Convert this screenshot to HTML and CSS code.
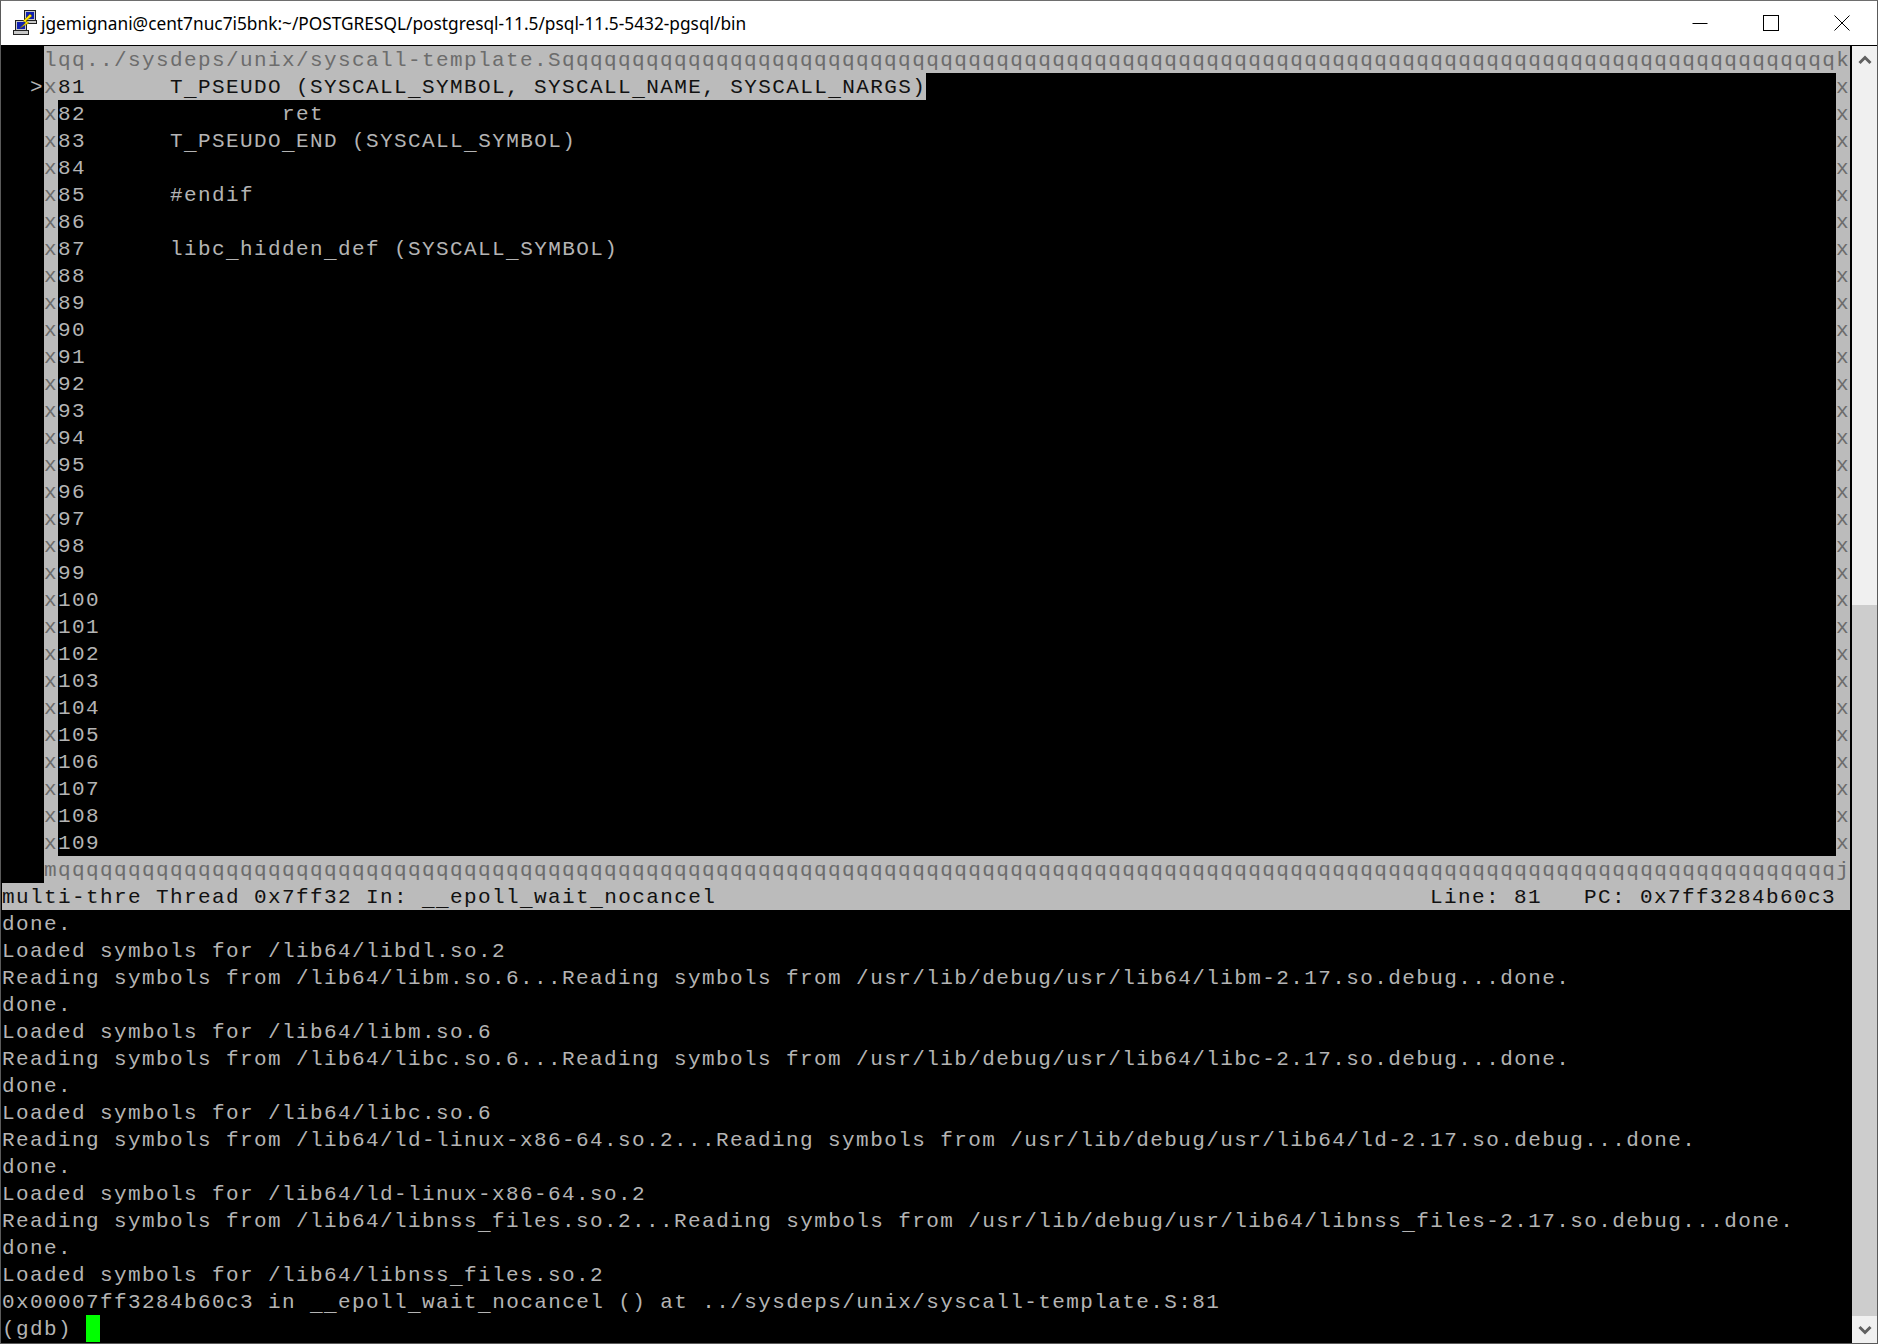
FILE: index.html
```html
<!DOCTYPE html>
<html lang="en">
<head>
<meta charset="utf-8">
<title>jgemignani@cent7nuc7i5bnk</title>
<link rel="stylesheet" href="styles.css">
</head>
<body>
<div class="window">
  <header class="titlebar">
    <svg class="app-icon" width="26" height="26" viewBox="0 0 26 26">
      <rect x="12.5" y="0.5" width="11" height="10" fill="#c8c8c8" stroke="#222"/>
      <rect x="14" y="2" width="8" height="7" fill="#1020b0"/>
      <rect x="14.5" y="10.5" width="10" height="3" fill="#c8c8c8" stroke="#222"/>
      <rect x="3.5" y="10.5" width="11" height="10" fill="#c8c8c8" stroke="#222"/>
      <rect x="5" y="12" width="8" height="7" fill="#1020b0"/>
      <rect x="1.5" y="20.5" width="15" height="4" fill="#c8c8c8" stroke="#222"/>
      <path d="M18 4 L11 11 L14 12.5 L8 18 L17 13 L14 11 L20 6 Z" fill="#ffe600" stroke="#6b5a00" stroke-width=".5"/>
    </svg>
    <span class="title">jgemignani@cent7nuc7i5bnk:~/POSTGRESQL/postgresql-11.5/psql-11.5-5432-pgsql/bin</span>
    <div class="controls">
      <svg width="16" height="16" viewBox="0 0 16 16"><path d="M0.5 8.5H15.5" stroke="#000" fill="none"/></svg>
      <svg width="16" height="16" viewBox="0 0 16 16"><rect x="0.5" y="0.5" width="15" height="15" stroke="#000" fill="none"/></svg>
      <svg width="16" height="16" viewBox="0 0 16 16"><path d="M0.5 0.5L15.5 15.5M15.5 0.5L0.5 15.5" stroke="#000" fill="none"/></svg>
    </div>
  </header>
  <div class="client">
    <main class="terminal">
      <div class="row"><span class="gutter"></span><span class="edge grow">lqq../sysdeps/unix/syscall-template.Sqqqqqqqqqqqqqqqqqqqqqqqqqqqqqqqqqqqqqqqqqqqqqqqqqqqqqqqqqqqqqqqqqqqqqqqqqqqqqqqqqqqqqqqqqqqk</span></div>
      <div class="row"><span class="gutter">&gt;</span><span class="edge">x</span><span class="code"><span class="hl">81      T<span class="us">_</span>PSEUDO (SYSCALL<span class="us">_</span>SYMBOL, SYSCALL<span class="us">_</span>NAME, SYSCALL<span class="us">_</span>NARGS)</span></span><span class="edge">x</span></div>
      <div class="row"><span class="gutter"></span><span class="edge">x</span><span class="code">82              ret</span><span class="edge">x</span></div>
      <div class="row"><span class="gutter"></span><span class="edge">x</span><span class="code">83      T<span class="us">_</span>PSEUDO<span class="us">_</span>END (SYSCALL<span class="us">_</span>SYMBOL)</span><span class="edge">x</span></div>
      <div class="row"><span class="gutter"></span><span class="edge">x</span><span class="code">84</span><span class="edge">x</span></div>
      <div class="row"><span class="gutter"></span><span class="edge">x</span><span class="code">85      #endif</span><span class="edge">x</span></div>
      <div class="row"><span class="gutter"></span><span class="edge">x</span><span class="code">86</span><span class="edge">x</span></div>
      <div class="row"><span class="gutter"></span><span class="edge">x</span><span class="code">87      libc<span class="us">_</span>hidden<span class="us">_</span>def (SYSCALL<span class="us">_</span>SYMBOL)</span><span class="edge">x</span></div>
      <div class="row"><span class="gutter"></span><span class="edge">x</span><span class="code">88</span><span class="edge">x</span></div>
      <div class="row"><span class="gutter"></span><span class="edge">x</span><span class="code">89</span><span class="edge">x</span></div>
      <div class="row"><span class="gutter"></span><span class="edge">x</span><span class="code">90</span><span class="edge">x</span></div>
      <div class="row"><span class="gutter"></span><span class="edge">x</span><span class="code">91</span><span class="edge">x</span></div>
      <div class="row"><span class="gutter"></span><span class="edge">x</span><span class="code">92</span><span class="edge">x</span></div>
      <div class="row"><span class="gutter"></span><span class="edge">x</span><span class="code">93</span><span class="edge">x</span></div>
      <div class="row"><span class="gutter"></span><span class="edge">x</span><span class="code">94</span><span class="edge">x</span></div>
      <div class="row"><span class="gutter"></span><span class="edge">x</span><span class="code">95</span><span class="edge">x</span></div>
      <div class="row"><span class="gutter"></span><span class="edge">x</span><span class="code">96</span><span class="edge">x</span></div>
      <div class="row"><span class="gutter"></span><span class="edge">x</span><span class="code">97</span><span class="edge">x</span></div>
      <div class="row"><span class="gutter"></span><span class="edge">x</span><span class="code">98</span><span class="edge">x</span></div>
      <div class="row"><span class="gutter"></span><span class="edge">x</span><span class="code">99</span><span class="edge">x</span></div>
      <div class="row"><span class="gutter"></span><span class="edge">x</span><span class="code">100</span><span class="edge">x</span></div>
      <div class="row"><span class="gutter"></span><span class="edge">x</span><span class="code">101</span><span class="edge">x</span></div>
      <div class="row"><span class="gutter"></span><span class="edge">x</span><span class="code">102</span><span class="edge">x</span></div>
      <div class="row"><span class="gutter"></span><span class="edge">x</span><span class="code">103</span><span class="edge">x</span></div>
      <div class="row"><span class="gutter"></span><span class="edge">x</span><span class="code">104</span><span class="edge">x</span></div>
      <div class="row"><span class="gutter"></span><span class="edge">x</span><span class="code">105</span><span class="edge">x</span></div>
      <div class="row"><span class="gutter"></span><span class="edge">x</span><span class="code">106</span><span class="edge">x</span></div>
      <div class="row"><span class="gutter"></span><span class="edge">x</span><span class="code">107</span><span class="edge">x</span></div>
      <div class="row"><span class="gutter"></span><span class="edge">x</span><span class="code">108</span><span class="edge">x</span></div>
      <div class="row"><span class="gutter"></span><span class="edge">x</span><span class="code">109</span><span class="edge">x</span></div>
      <div class="row"><span class="gutter"></span><span class="edge grow">mqqqqqqqqqqqqqqqqqqqqqqqqqqqqqqqqqqqqqqqqqqqqqqqqqqqqqqqqqqqqqqqqqqqqqqqqqqqqqqqqqqqqqqqqqqqqqqqqqqqqqqqqqqqqqqqqqqqqqqqqqqqqqqqj</span></div>
      <div class="row status"><span>multi-thre Thread 0x7ff32 In: <span class="us">__</span>epoll<span class="us">_</span>wait<span class="us">_</span>nocancel</span><span class="status-right">Line: 81   PC: 0x7ff3284b60c3 </span></div>
      <div class="row">done.</div>
      <div class="row">Loaded symbols for /lib64/libdl.so.2</div>
      <div class="row">Reading symbols from /lib64/libm.so.6...Reading symbols from /usr/lib/debug/usr/lib64/libm-2.17.so.debug...done.</div>
      <div class="row">done.</div>
      <div class="row">Loaded symbols for /lib64/libm.so.6</div>
      <div class="row">Reading symbols from /lib64/libc.so.6...Reading symbols from /usr/lib/debug/usr/lib64/libc-2.17.so.debug...done.</div>
      <div class="row">done.</div>
      <div class="row">Loaded symbols for /lib64/libc.so.6</div>
      <div class="row">Reading symbols from /lib64/ld-linux-x86-64.so.2...Reading symbols from /usr/lib/debug/usr/lib64/ld-2.17.so.debug...done.</div>
      <div class="row">done.</div>
      <div class="row">Loaded symbols for /lib64/ld-linux-x86-64.so.2</div>
      <div class="row"><span>Reading symbols from /lib64/libnss<span class="us">_</span>files.so.2...Reading symbols from /usr/lib/debug/usr/lib64/libnss<span class="us">_</span>files-2.17.so.debug...done.</span></div>
      <div class="row">done.</div>
      <div class="row"><span>Loaded symbols for /lib64/libnss<span class="us">_</span>files.so.2</span></div>
      <div class="row"><span>0x00007ff3284b60c3 in <span class="us">__</span>epoll<span class="us">_</span>wait<span class="us">_</span>nocancel () at ../sysdeps/unix/syscall-template.S:81</span></div>
      <div class="row">(gdb) <span class="cursor"></span></div>
    </main>
    <aside class="scrollbar">
      <div class="arrow"><svg width="14" height="10" viewBox="0 0 14 10"><path d="M1.5 8L7 2.5L12.5 8" stroke="#606060" stroke-width="3" fill="none"/></svg></div>
      <div class="track"></div>
      <div class="thumb"></div>
      <div class="arrow"><svg width="14" height="10" viewBox="0 0 14 10"><path d="M1.5 2L7 7.5L12.5 2" stroke="#606060" stroke-width="3" fill="none"/></svg></div>
    </aside>
  </div>
</div>
</body>
</html>
```
FILE: styles.css
```css
* { box-sizing: border-box; }
html, body { margin: 0; padding: 0; background: #000; }
body { width: 1878px; height: 1344px; overflow: hidden; }
.window { display: flex; flex-direction: column; width: 1878px; height: 1344px; border-top: 1px solid #6e6e6e; border-left: 1px solid #5a5a5a; border-right: 1px solid #5a5a5a; border-bottom: 1px solid #5a5a5a; }
.titlebar { display: flex; align-items: center; height: 44px; padding-left: 11px; background: #fff; flex: none; }
.app-icon { flex: none; }
.title { margin-left: 3px; padding-top: 1px; font: 17.3px/24px "Noto Sans", sans-serif; color: #000; white-space: nowrap; }
.controls { display: flex; gap: 55px; margin-left: auto; margin-right: 27px; }
.client { display: flex; flex: 1; min-height: 0; background: #000; border-top: 1px solid #000; }
.terminal { width: 1851px; padding-left: 1px; flex: none; font-family: "Liberation Mono", monospace; font-size: 21px; letter-spacing: 1.4px; color: #b4b4b4; }
.row { display: flex; height: 27px; line-height: 29px; white-space: pre; width: 1848px; }
.gutter { width: 42px; flex: none; text-align: right; }
.edge { width: 14px; flex: none; background: #bbb; color: #6c6c6c; overflow: hidden; }
.edge.grow { flex: 1; width: auto; }
.code { flex: 1; height: 27px; }
.hl { display: inline-block; height: 27px; vertical-align: top; background: #bbb; color: #111; }
.us { vertical-align: -3px; line-height: 1; }
.status { background: #bbb; color: #111; justify-content: space-between; }
.cursor { display: block; width: 14px; height: 27px; background: #0f0; }
.scrollbar { display: flex; flex-direction: column; width: 25px; background: #f0f0f0; flex: none; }
.arrow { display: flex; align-items: center; justify-content: center; height: 27px; flex: none; }
.track { height: 532px; flex: none; }
.thumb { flex: 1; background: #cdcdcd; }
```
